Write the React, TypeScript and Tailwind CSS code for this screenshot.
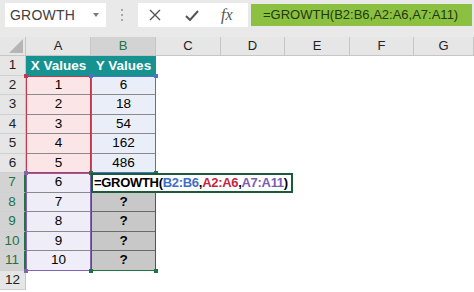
import React from "react"

const font = { fontFamily: '"Liberation Sans", Arial, sans-serif' }

const cols = [
  { key: "A", w: "w-[65px]" },
  { key: "B", w: "w-[65px]" },
  { key: "C", w: "w-[65px]" },
  { key: "D", w: "w-[64px]" },
  { key: "E", w: "w-[65px]" },
  { key: "F", w: "w-[64px]" },
  { key: "G", w: "flex-1" },
]

const xs = ["1", "2", "3", "4", "5", "6", "7", "8", "9", "10"]
const ys = ["6", "18", "54", "162", "486"]

function Toolbar() {
  return (
    <div className="h-[37px] bg-[#e9e9e9] flex items-start pt-[3px]">
      <div className="ml-[5px] w-[101px] h-[24px] bg-white flex items-center justify-between pl-[5px] pr-[7px]">
        <span className="text-[14px] text-[#404040] tracking-[0.2px]">GROWTH</span>
        <svg width="6" height="4" viewBox="0 0 6 4">
          <path d="M0 0h6L3 4z" fill="#7a7a7a" />
        </svg>
      </div>
      <div className="w-[32px] h-[24px] flex flex-col items-center justify-center gap-[3px]">
        <span className="w-[2px] h-[2px] bg-[#a8a8a8]" />
        <span className="w-[2px] h-[2px] bg-[#a8a8a8]" />
        <span className="w-[2px] h-[2px] bg-[#a8a8a8]" />
      </div>
      <div className="w-[110px] h-[24px] bg-white flex items-center">
        <svg className="ml-[11px]" width="12" height="12" viewBox="0 0 12 12">
          <path d="M1 1l10 10M11 1L1 11" stroke="#555" strokeWidth="1.4" />
        </svg>
        <svg className="ml-[24px]" width="14" height="11" viewBox="0 0 14 11">
          <path d="M1 6l4 4L13 1" stroke="#555" strokeWidth="2" fill="none" />
        </svg>
        <span
          className="ml-[22px] text-[16px] italic text-[#555]"
          style={{ fontFamily: '"Liberation Serif", "Times New Roman", serif' }}
        >
          fx
        </span>
      </div>
      <div className="ml-[3px] mt-[1px] w-[221px] h-[22px] bg-[#8cc041] flex items-center pl-[12px] overflow-hidden">
        <span className="text-[13px] text-[#1e3a0e] whitespace-nowrap">=GROWTH(B2:B6,A2:A6,A7:A11)</span>
      </div>
    </div>
  )
}

function HeaderRow() {
  return (
    <div className="h-[19px] flex bg-[#e6e6e6] border-b border-[#c6c6c6]">
      <div className="w-[26px] border-r border-[#c6c6c6] flex items-end justify-end pr-[2px] pb-[2px]">
        <svg width="14" height="14" viewBox="0 0 14 14">
          <path d="M14 0v14H0z" fill="#b5b5b5" />
        </svg>
      </div>
      {cols.map((c) => (
        <div
          key={c.key}
          className={`${c.w} border-r border-[#c6c6c6] flex items-center justify-center text-[13px] ${
            c.key === "B" ? "bg-[#d3d3d3] text-[#217346]" : "text-[#222]"
          }`}
        >
          {c.key}
        </div>
      ))}
    </div>
  )
}

function Row({ n }: { n: number }) {
  const sel = n >= 7 && n <= 11
  let a: React.ReactNode = null
  let b: React.ReactNode = null
  let aCls = ""
  let bCls = ""
  if (n === 1) {
    a = "X Values"
    b = "Y Values"
    aCls = "bg-[#169290] text-white font-bold"
    bCls = "bg-[#169290] text-white font-bold"
  } else if (n <= 6) {
    a = xs[n - 2]
    b = ys[n - 2]
    aCls = "bg-[#fbe5e6] border-b border-[#8a8a8a]"
    bCls = "bg-[#e9eef8] border-b border-[#8a8a8a]"
  } else if (n <= 11) {
    a = xs[n - 2]
    b = n === 7 ? null : "?"
    aCls = "bg-[#efedf8] border-b border-[#8a8a8a]"
    bCls = n === 7 ? "bg-white" : "bg-[#c8c8c8] font-bold border-b border-[#6a6a6a]"
  }
  return (
    <div className="h-[19.5px] flex">
      <div
        className={`w-[26px] flex items-center justify-center text-[13.5px] border-b border-[#d0d0d0] ${
          sel
            ? "bg-[#d3d3d3] text-[#217346] border-r-2 border-r-[#217346]"
            : "bg-[#e6e6e6] text-[#222] border-r border-r-[#c6c6c6]"
        }`}
      >
        {n}
      </div>
      <div className={`w-[65px] flex items-center justify-center text-[13.5px] text-black ${aCls}`}>{a}</div>
      <div className={`w-[65px] flex items-center justify-center text-[13.5px] text-black ${bCls}`}>{b}</div>
      <div className="flex-1 bg-white" />
    </div>
  )
}

function RangeBox({ left, top, width, height, color }: { left: number; top: number; width: number; height: number; color: string }) {
  const dot = "absolute w-[4px] h-[4px]"
  return (
    <div className="absolute pointer-events-none" style={{ left, top, width, height }}>
      <div className="absolute inset-0 border" style={{ borderColor: color }} />
      <span className={`${dot} -left-[2px] -top-[2px]`} style={{ background: color }} />
      <span className={`${dot} -right-[2px] -top-[2px]`} style={{ background: color }} />
      <span className={`${dot} -left-[2px] -bottom-[2px]`} style={{ background: color }} />
      <span className={`${dot} -right-[2px] -bottom-[2px]`} style={{ background: color }} />
    </div>
  )
}

export default function App() {
  const rows = Array.from({ length: 12 }, (_, i) => i + 1)
  return (
    <div className="w-[474px] h-[292px] overflow-hidden bg-white" style={font}>
      <Toolbar />
      <div className="relative">
        <HeaderRow />
        {rows.map((n) => (
          <Row key={n} n={n} />
        ))}
        <RangeBox left={26} top={38.5} width={65} height={97.5} color="#c3374c" />
        <RangeBox left={91} top={38.5} width={65} height={97.5} color="#4a74c4" />
        <RangeBox left={26} top={136} width={65} height={97.5} color="#8264b0" />
        <RangeBox left={91} top={136} width={65} height={97.5} color="#217346" />
        <div className="absolute left-[91px] top-[136px] w-[202px] h-[20px] bg-white border-2 border-[#1c5b3a] flex items-center pl-[1px] text-[13px] font-bold whitespace-nowrap tracking-[-0.3px]">
          <span className="text-black">=GROWTH(</span>
          <span className="text-[#3f6fc4]">B2:B6</span>
          <span className="text-black">,</span>
          <span className="text-[#c3283f]">A2:A6</span>
          <span className="text-black">,</span>
          <span className="text-[#7d5db4]">A7:A11</span>
          <span className="text-black">)</span>
        </div>
      </div>
    </div>
  )
}
